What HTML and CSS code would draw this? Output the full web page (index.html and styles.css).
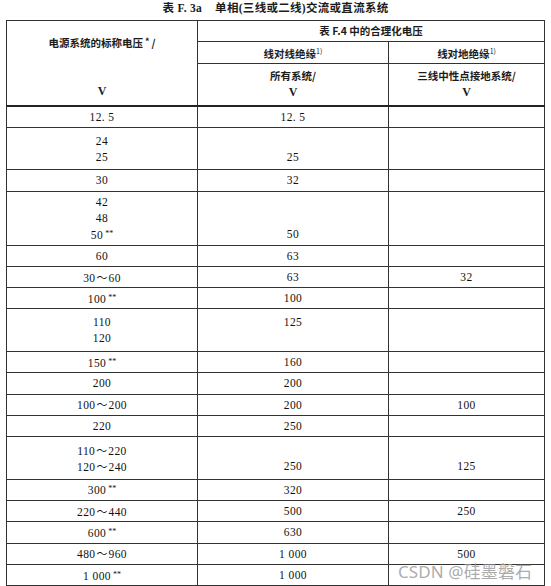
FILE: index.html
```html
<!DOCTYPE html>
<html lang="zh">
<head>
<meta charset="utf-8">
<title>表 F.3a 单相(三线或二线)交流或直流系统</title>
<link rel="stylesheet" href="styles.css">
</head>
<body>
<div class="page">
  <h1 class="title"><span class="tno">表 F. 3a</span>单相(三线或二线)交流或直流系统</h1>
  <table class="grid">
    <colgroup>
      <col class="c1"><col class="c2"><col class="c3">
    </colgroup>
    <thead>
      <tr class="ha">
        <th rowspan="3" class="hcol1">
          <div class="stack">
            <span>电源系统的标称电压<sup class="star">*</sup>/</span>
            <span class="unit">V</span>
          </div>
        </th>
        <th colspan="2">表 F.4 中的合理化电压</th>
      </tr>
      <tr class="hb">
        <th>线对线绝缘<sup class="fn">1)</sup></th>
        <th>线对地绝缘<sup class="fn">1)</sup></th>
      </tr>
      <tr class="hc">
        <th><div class="pair"><span>所有系统/</span><span class="unit">V</span></div></th>
        <th><div class="pair"><span>三线中性点接地系统/</span><span class="unit">V</span></div></th>
      </tr>
    </thead>
    <tbody>
      <tr class="one"><td>12. 5</td><td>12. 5</td><td></td></tr>
      <tr class="two"><td><div class="ln">24</div><div class="ln">25</div></td><td><div class="ln">&nbsp;</div><div class="ln">25</div></td><td></td></tr>
      <tr class="one"><td>30</td><td>32</td><td></td></tr>
      <tr class="three"><td><div class="ln">42</div><div class="ln">48</div><div class="ln">50<sup class="st">**</sup></div></td><td><div class="ln">&nbsp;</div><div class="ln">&nbsp;</div><div class="ln">50</div></td><td></td></tr>
      <tr class="one"><td>60</td><td>63</td><td></td></tr>
      <tr class="one"><td>30<span class="tl">～</span>60</td><td>63</td><td>32</td></tr>
      <tr class="one"><td>100<sup class="st">**</sup></td><td>100</td><td></td></tr>
      <tr class="two"><td><div class="ln">110</div><div class="ln">120</div></td><td><div class="ln">125</div><div class="ln">&nbsp;</div></td><td></td></tr>
      <tr class="one"><td>150<sup class="st">**</sup></td><td>160</td><td></td></tr>
      <tr class="one"><td>200</td><td>200</td><td></td></tr>
      <tr class="one"><td>100<span class="tl">～</span>200</td><td>200</td><td>100</td></tr>
      <tr class="one"><td>220</td><td>250</td><td></td></tr>
      <tr class="two"><td><div class="ln">110<span class="tl">～</span>220</div><div class="ln">120<span class="tl">～</span>240</div></td><td><div class="ln">&nbsp;</div><div class="ln">250</div></td><td><div class="ln">&nbsp;</div><div class="ln">125</div></td></tr>
      <tr class="one"><td>300<sup class="st">**</sup></td><td>320</td><td></td></tr>
      <tr class="one"><td>220<span class="tl">～</span>440</td><td>500</td><td>250</td></tr>
      <tr class="one"><td>600<sup class="st">**</sup></td><td>630</td><td></td></tr>
      <tr class="one"><td>480<span class="tl">～</span>960</td><td>1 000</td><td>500</td></tr>
      <tr class="one"><td>1 000<sup class="st">**</sup></td><td>1 000</td><td></td></tr>
    </tbody>
  </table>
  <div class="watermark">CSDN @硅墨磐石</div>
</div>
</body>
</html>
```

FILE: styles.css
```css
html, body {
  margin: 0;
  padding: 0;
  background: #ffffff;
}

.page {
  position: relative;
  width: 551px;
  height: 586px;
  color: #1c1c1c;
  font-family: "Liberation Serif", "Noto Sans CJK SC", serif;
}

.title {
  margin: 0;
  height: 16px;
  line-height: 16px;
  font-size: 11.5px;
  font-weight: bold;
  text-align: center;
  font-family: "Liberation Serif", "Noto Sans CJK SC", serif;
  letter-spacing: 0.3px;
}

.tno {
  margin-right: 13px;
}

.grid {
  margin: 4px 0 0 6px;
  width: 538px;
  table-layout: fixed;
  border-collapse: collapse;
  border: 1.5px solid #2a2a2a;
  font-size: 11px;
}

.c1 { width: 191px; }
.c2 { width: 191px; }
.c3 { width: 156px; }

.grid th,
.grid td {
  border: 1px solid #333;
  padding: 0;
  text-align: center;
  vertical-align: middle;
  font-weight: normal;
  line-height: 14px;
}

.grid th {
  font-family: "Noto Sans CJK SC", sans-serif;
  font-weight: 600;
  font-size: 10.5px;
}

.grid thead tr.hc th,
.grid thead th.hcol1 {
  border-bottom: 2px solid #222;
}

.ha { height: 21px; }
.hb { height: 21px; }
.hc { height: 42px; }

.stack {
  height: 84px;
  box-sizing: border-box;
  padding: 14px 0 7px;
  display: flex;
  flex-direction: column;
  justify-content: space-between;
  align-items: center;
}

.pair {
  display: flex;
  flex-direction: column;
  align-items: center;
  line-height: 17px;
}

.unit {
  font-family: "Liberation Serif", serif;
  font-weight: bold;
  font-size: 12px;
}

.star {
  font-size: 9px;
  vertical-align: 2px;
  margin: 0 2px;
}

.fn {
  font-size: 7px;
  vertical-align: 4px;
  font-weight: normal;
}

.grid td {
  font-family: "Liberation Serif", serif;
  font-size: 11.5px;
  letter-spacing: 0.4px;
  color: #111;
}

.tl {
  display: inline-block;
  width: 11px;
  font-family: "Noto Sans CJK SC", sans-serif;
  font-size: 11px;
  letter-spacing: 0;
  margin: 0 1px;
  text-align: center;
}

.one { height: 21.3px; }
.two { height: 42.5px; }
.three { height: 54px; }

.ln {
  line-height: 16px;
  height: 16px;
}

.st {
  font-size: 8px;
  vertical-align: 3px;
  margin-left: 2px;
  letter-spacing: 0;
}

.watermark {
  position: absolute;
  left: 398px;
  top: 561px;
  font-family: "Noto Sans", "Noto Sans CJK SC", sans-serif;
  font-size: 17px;
  line-height: 22px;
  color: rgba(150, 150, 150, 0.8);
  letter-spacing: 0.1px;
  white-space: nowrap;
}
```
